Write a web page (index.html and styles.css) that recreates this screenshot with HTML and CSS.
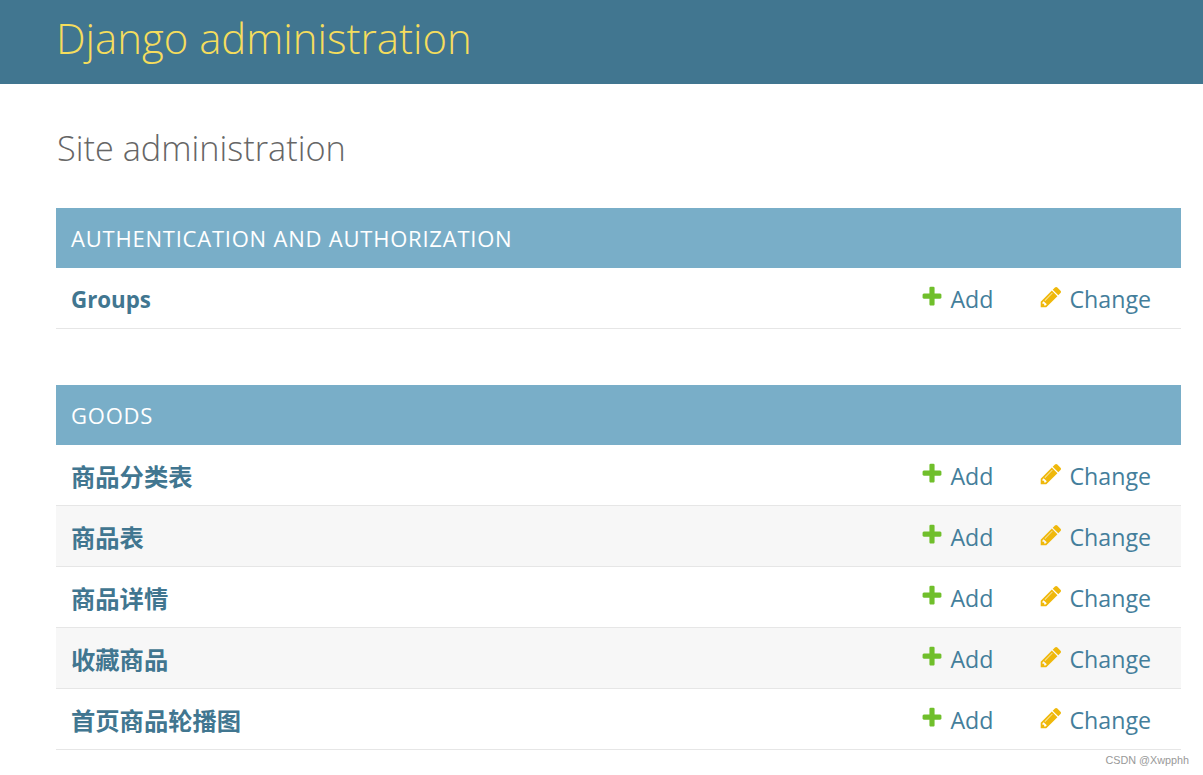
FILE: index.html
```html
<!DOCTYPE html>
<html lang="en">

<head>
  <meta charset="UTF-8">
  <title>Site administration | Django site admin</title>
  <link rel="stylesheet" href="styles.css">
</head>

<body>
  <svg class="icon-defs" xmlns="http://www.w3.org/2000/svg">
    <symbol id="icon-add" viewBox="0 0 1792 1792">
      <path d="M1600 736v192q0 40-28 68t-68 28h-416v416q0 40-28 68t-68 28h-192q-40 0-68-28t-28-68v-416h-416q-40 0-68-28t-28-68v-192q0-40 28-68t68-28h416v-416q0-40 28-68t68-28h192q40 0 68 28t28 68v416h416q40 0 68 28t28 68z" />
    </symbol>
    <symbol id="icon-change" viewBox="0 0 1792 1792">
      <path d="M491 1536l91-91-235-235-91 91v107h128v128h107zm523-928q0-22-22-22-10 0-17 7l-542 542q-7 7-7 17 0 22 22 22 10 0 17-7l542-542q7-7 7-17zm-54-192l416 416-832 832h-416v-416zm683 96q0 53-37 90l-166 166-416-416 166-165q36-38 90-38 53 0 91 38l235 234q37 39 37 91z" />
    </symbol>
  </svg>

  <header class="site-header">
    <h1 class="branding">Django administration</h1>
  </header>

  <main class="content">
    <h2 class="page-title">Site administration</h2>

    <section class="module">
      <h3 class="caption">Authentication and Authorization</h3>
      <div class="row">
        <a class="model-name model-latin">Groups</a>
        <a class="action action-add"><svg class="icon"><use href="#icon-add"></use></svg>Add</a>
        <a class="action action-change"><svg class="icon"><use href="#icon-change"></use></svg>Change</a>
      </div>
    </section>

    <section class="module">
      <h3 class="caption">Goods</h3>
      <div class="row">
        <a class="model-name">商品分类表</a>
        <a class="action action-add"><svg class="icon"><use href="#icon-add"></use></svg>Add</a>
        <a class="action action-change"><svg class="icon"><use href="#icon-change"></use></svg>Change</a>
      </div>
      <div class="row">
        <a class="model-name">商品表</a>
        <a class="action action-add"><svg class="icon"><use href="#icon-add"></use></svg>Add</a>
        <a class="action action-change"><svg class="icon"><use href="#icon-change"></use></svg>Change</a>
      </div>
      <div class="row">
        <a class="model-name">商品详情</a>
        <a class="action action-add"><svg class="icon"><use href="#icon-add"></use></svg>Add</a>
        <a class="action action-change"><svg class="icon"><use href="#icon-change"></use></svg>Change</a>
      </div>
      <div class="row">
        <a class="model-name">收藏商品</a>
        <a class="action action-add"><svg class="icon"><use href="#icon-add"></use></svg>Add</a>
        <a class="action action-change"><svg class="icon"><use href="#icon-change"></use></svg>Change</a>
      </div>
      <div class="row">
        <a class="model-name">首页商品轮播图</a>
        <a class="action action-add"><svg class="icon"><use href="#icon-add"></use></svg>Add</a>
        <a class="action action-change"><svg class="icon"><use href="#icon-change"></use></svg>Change</a>
      </div>
    </section>
  </main>

  <div class="watermark">CSDN @Xwpphh</div>
</body>

</html>
```

FILE: styles.css
```css
html,
body {
  height: 775px;
  overflow: hidden;
}

body {
  margin: 0;
  position: relative;
  font-family: "Open Sans", "Noto Sans CJK SC", sans-serif;
  background: #fff;
}

.icon-defs {
  display: none;
}

.site-header {
  height: 84px;
  padding-left: 56px;
  background: #417690;
}

.branding {
  margin: 0;
  font-size: 41.9px;
  font-weight: 300;
  line-height: 76px;
  color: #f5dd5d;
}

.content {
  padding: 0 22px 0 56px;
}

.page-title {
  margin: 0;
  padding: 40px 0 36px 1px;
  font-size: 34.3px;
  font-weight: 300;
  line-height: 48px;
  color: #666;
}

.module {
  margin-bottom: 56px;
}

.caption {
  margin: 0;
  height: 60px;
  padding-left: 15px;
  font-size: 22px;
  font-weight: 400;
  line-height: 60px;
  letter-spacing: 0.78px;
  text-transform: uppercase;
  color: #fff;
  background: #79aec8;
}

.row {
  display: flex;
  align-items: center;
  height: 60px;
  padding: 0 30px 0 15px;
  border-bottom: 1px solid #e6e6e6;
}

.row:nth-of-type(even) {
  background: #f7f7f7;
}

.model-name {
  flex: 1;
  font-size: 24.3px;
  font-weight: 700;
  color: #417690;
}

.model-latin {
  padding-top: 2px;
  font-size: 22.3px;
}

.action {
  display: flex;
  align-items: center;
  padding-top: 2px;
  font-size: 23.2px;
  color: #447e9b;
}

.action-add {
  width: 118px;
}

.icon {
  width: 24px;
  height: 24px;
  margin: -4px 6px 0 -2px;
}

.action-add .icon {
  fill: #70bf2b;
}

.action-change .icon {
  margin-left: -1px;
  fill: #efb80b;
}

.watermark {
  position: absolute;
  right: 14px;
  bottom: 9px;
  font-family: "Liberation Sans", sans-serif;
  font-size: 10.8px;
  color: #999;
}
```
